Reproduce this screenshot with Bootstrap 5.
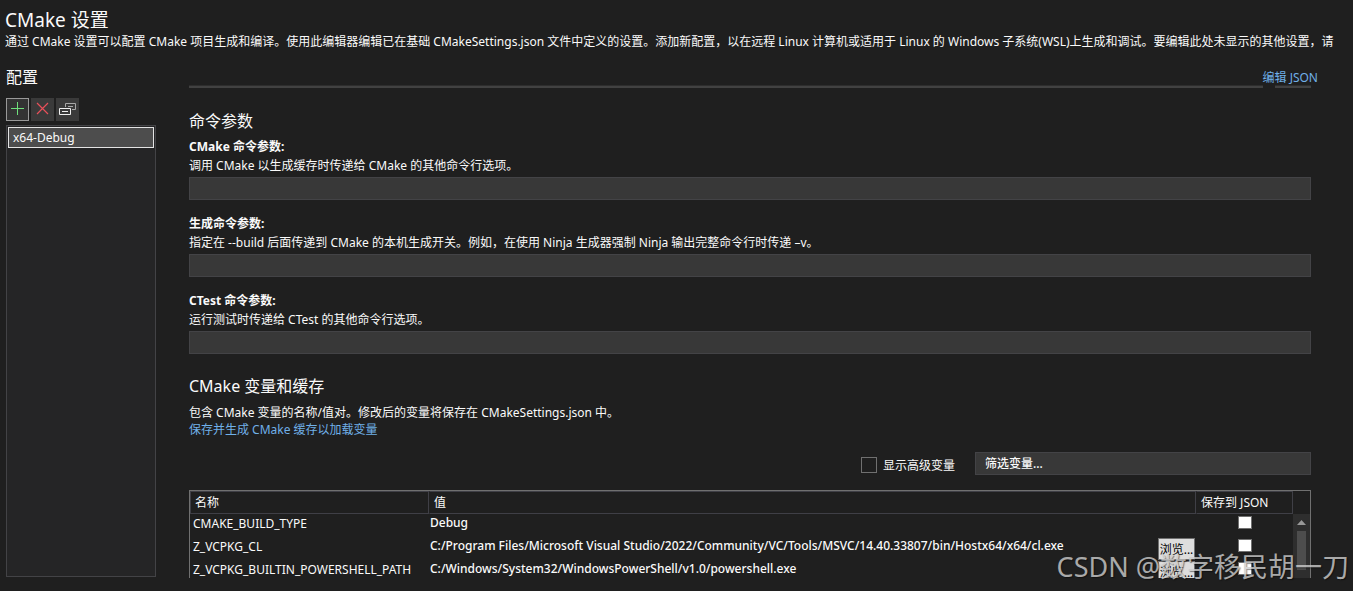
<!DOCTYPE html>
<html lang="zh-CN">
<head>
<meta charset="utf-8">
<meta name="viewport" content="width=device-width, initial-scale=1">
<title>CMake 设置</title>
<link href="https://cdn.jsdelivr.net/npm/bootstrap@5.3.0/dist/css/bootstrap.min.css" rel="stylesheet">
<style>
  body { background: #1f1f1f; color: #fafafa; font-family: "Noto Sans", "Noto Sans CJK SC", sans-serif; font-size: 12px; line-height: 19px; }
  a { color: #70b0e8; text-decoration: none; }
  h1 { font-size: 19px; line-height: 24px; font-weight: 400; margin: 0; }
  h2 { font-size: 16px; line-height: 24px; font-weight: 400; margin: 0; }
  .page-head { padding: 8px 0 0 5px; }
  .intro { line-height: 20px; margin: 0; }
  .workspace { padding: 13px 42px 0 6px; gap: 33px; min-height: 0; }
  .side { width: 150px; padding-bottom: 14px; }
  .tools { gap: 2px; margin: 9px 0 4px; }
  .tool { width: 23px; height: 23px; padding: 0; border: 1px solid #3a3a3a; background: #3a3a3a; border-radius: 0; line-height: 0; }
  .tool svg { display: block; }
  .tool.current { border-color: #999; background: #333; }
  .configs { background: #252526; border: 1px solid #434346; padding: 1px; }
  .configs .list-group-item { background: #4d4d4d; border: 1px solid #e4e4e4; color: #fafafa; padding: 0 4px; line-height: 19px; }
  .main-col { min-width: 0; padding-bottom: 13px; }
  .json-row { height: 20px; line-height: 26px; margin-right: -7px; }
  .rules { gap: 12px; }
  .rule { height: 3px; background: #414141; border-top: 1px solid #2d2d2d; }
  .rule-end { width: 36px; }
  .section-a { margin-top: 21px; }
  .section-b { margin-top: 20px; }
  .field { margin-top: 14px; }
  .section-a + .field { margin-top: 4px; }
  .field label { font-weight: 700; }
  .dark-input { height: 23px; background: #383838 !important; border: 1px solid #434346; border-radius: 0; color: #fafafa !important; font-size: 12px; line-height: 19px; padding: 0 9px; }
  .dark-input::placeholder { color: #fafafa; opacity: 1; font-weight: 500; }
  .field .dark-input { margin-top: 2px; }
  .cache-note { line-height: 17px; margin-top: 6px; }
  .filters { margin-top: 14px; gap: 20px; }
  .filters .dark-input { width: 336px; }
  .advanced { gap: 6px; padding-top: 3px; }
  .box { appearance: none; margin: 0; border: 1px solid #707070; }
  .advanced .box { width: 16px; height: 16px; }
  .grid-wrap { margin-top: 15px; border: 1px solid #707070; border-bottom: 0; min-height: 0; }
  .vars { table-layout: fixed; width: 100%; border-collapse: separate; border-spacing: 0; }
  .vars th { font-weight: 400; height: 23px; padding: 0 4px; border: 1px solid #3f3f46; line-height: 19px; }
  .vars th + th { border-left-color: #1f1f1f; }
  .vars td { height: 23px; padding: 0 0 0 3px; line-height: 19px; white-space: nowrap; vertical-align: top; }
  .vars .val { font-weight: 500; line-height: 17px; padding: 0 1px; }
  .vars .save { padding: 2px 0 0; }
  .name-w { width: 239px; }
  .save-w { width: 97px; }
  .save .box { display: block; width: 14px; height: 13px; background: #fff; margin: 0 auto; }
  .browse { width: 37px; height: 22px; padding: 0; border: 1px solid #707070; border-radius: 0; background: #ddd; color: #000; font-size: 12px; line-height: 19px; margin-top: 1px; }
  .scroller { width: 17px; }
  .scroll-head { height: 23px; }
  .track { background: #2e2e2e; }
  .arrow { height: 17px; line-height: 0; padding: 6px 0 0 4px; }
  .thumb { width: 9px; height: 39px; background: #4d4d4d; margin: 0 4px; }
  .watermark { right: 4px; bottom: 6px; font-size: 27px; line-height: 36px; color: #ccc; opacity: .8; text-shadow: 1px 1px 1px #0008; pointer-events: none; }
</style>
</head>
<body>
<div class="vh-100 d-flex flex-column overflow-hidden position-relative">
  <header class="page-head">
    <h1>CMake 设置</h1>
    <p class="intro text-nowrap">通过 CMake 设置可以配置 CMake 项目生成和编译。使用此编辑器编辑已在基础 CMakeSettings.json 文件中定义的设置。添加新配置，以在远程 Linux 计算机或适用于 Linux 的 Windows 子系统(WSL)上生成和调试。要编辑此处未显示的其他设置，请</p>
  </header>
  <div class="workspace d-flex flex-grow-1">
    <aside class="side d-flex flex-column flex-shrink-0">
      <h2>配置</h2>
      <div class="tools d-flex">
        <button type="button" class="btn tool current" aria-label="添加"><svg width="21" height="21" viewBox="0 0 21 21"><path d="M10.500 3v13M4 9.500h13" stroke="#6fe07b" fill="none"/></svg></button>
        <button type="button" class="btn tool" aria-label="删除"><svg width="21" height="21" viewBox="0 0 21 21"><path d="M5 4l11 11M16 4l-11 11" stroke="#e8505a" stroke-width="1.200" fill="none"/></svg></button>
        <button type="button" class="btn tool" aria-label="复制"><svg width="21" height="21" viewBox="0 0 21 21"><path d="M8.500 8V4.500h10v6H15M11 7.500h5" stroke="#a8a8a8" fill="none"/><path d="M2.500 9.500h11v6h-11zM5 12.500h6" stroke="#f0f0f0" fill="none"/></svg></button>
      </div>
      <div class="configs flex-grow-1">
        <div class="list-group rounded-0"><button type="button" class="list-group-item list-group-item-action">x64-Debug</button></div>
      </div>
    </aside>
    <main class="main-col d-flex flex-column flex-grow-1">
      <div class="json-row text-end"><a href="#">编辑 JSON</a></div>
      <div class="rules d-flex flex-shrink-0"><div class="rule flex-grow-1"></div><div class="rule rule-end"></div></div>

      <h2 class="section-a">命令参数</h2>
      <div class="field">
        <label class="d-block" for="cmakeArgs">CMake 命令参数:</label>
        <div>调用 CMake 以生成缓存时传递给 CMake 的其他命令行选项。</div>
        <input id="cmakeArgs" type="text" class="form-control dark-input">
      </div>
      <div class="field">
        <label class="d-block" for="buildArgs">生成命令参数:</label>
        <div>指定在 --build 后面传递到 CMake 的本机生成开关。例如，在使用 Ninja 生成器强制 Ninja 输出完整命令行时传递 –v。</div>
        <input id="buildArgs" type="text" class="form-control dark-input">
      </div>
      <div class="field">
        <label class="d-block" for="ctestArgs">CTest 命令参数:</label>
        <div>运行测试时传递给 CTest 的其他命令行选项。</div>
        <input id="ctestArgs" type="text" class="form-control dark-input">
      </div>

      <h2 class="section-b">CMake 变量和缓存</h2>
      <div class="cache-note">包含 CMake 变量的名称/值对。修改后的变量将保存在 CMakeSettings.json 中。<br><a href="#">保存并生成 CMake 缓存以加载变量</a></div>

      <div class="filters d-flex justify-content-end">
        <div class="advanced d-flex align-items-center">
          <input id="adv" type="checkbox" class="box"><label for="adv">显示高级变量</label>
        </div>
        <input type="text" class="form-control dark-input" placeholder="筛选变量..." aria-label="筛选变量">
      </div>

      <div class="grid-wrap d-flex flex-grow-1 overflow-hidden">
        <div class="flex-grow-1">
          <table class="vars">
            <colgroup><col class="name-w"><col><col class="save-w"></colgroup>
            <thead><tr><th>名称</th><th>值</th><th>保存到 JSON</th></tr></thead>
            <tbody>
              <tr><td>CMAKE_BUILD_TYPE</td><td class="val">Debug</td><td class="save"><input type="checkbox" class="box" aria-label="CMAKE_BUILD_TYPE"></td></tr>
              <tr><td>Z_VCPKG_CL</td><td class="val"><div class="d-flex justify-content-between"><span>C:/Program Files/Microsoft Visual Studio/2022/Community/VC/Tools/MSVC/14.40.33807/bin/Hostx64/x64/cl.exe</span><button type="button" class="btn browse">浏览...</button></div></td><td class="save"><input type="checkbox" class="box" aria-label="Z_VCPKG_CL"></td></tr>
              <tr><td>Z_VCPKG_BUILTIN_POWERSHELL_PATH</td><td class="val"><div class="d-flex justify-content-between"><span>C:/Windows/System32/WindowsPowerShell/v1.0/powershell.exe</span><button type="button" class="btn browse">浏览...</button></div></td><td class="save"><input type="checkbox" class="box" aria-label="Z_VCPKG_BUILTIN_POWERSHELL_PATH"></td></tr>
            </tbody>
          </table>
        </div>
        <div class="scroller d-flex flex-column flex-shrink-0" aria-hidden="true">
          <div class="scroll-head"></div>
          <div class="track flex-grow-1">
            <div class="arrow"><svg width="9" height="5" viewBox="0 0 9 5"><path d="M0 5L4.500 0L9 5z" fill="#999"/></svg></div>
            <div class="thumb"></div>
          </div>
        </div>
      </div>
    </main>
  </div>
  <div class="watermark position-absolute text-nowrap">CSDN @数字移民胡一刀</div>
</div>
<script src="https://cdn.jsdelivr.net/npm/bootstrap@5.3.0/dist/js/bootstrap.bundle.min.js"></script>
</body>
</html>
